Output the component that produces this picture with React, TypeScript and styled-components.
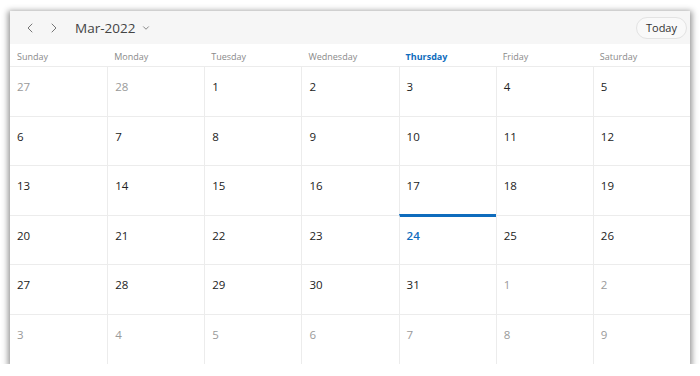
import styled, { createGlobalStyle } from "styled-components";
import { ChevronLeft, ChevronRight, ChevronDown } from "lucide-react";

const GlobalStyle = createGlobalStyle`
	body {
		margin: 0;
		background: #ffffff;
		font-family: "Open Sans", "Noto Sans", sans-serif;
	}
`;

const Page = styled.div`
	padding: 11px 10px 0 10px;
`;

const Card = styled.div`
	width: 680px;
	height: 353px;
	background: #ffffff;
	box-shadow: 0 2px 6px 2px rgba(0, 0, 0, 0.42);
	display: flex;
	flex-direction: column;
`;

const Header = styled.div`
	height: 33px;
	background: #f6f6f6;
	display: flex;
	align-items: center;
	padding: 0 3px 0 8px;
`;

const NavButton = styled.button`
	width: 24px;
	height: 24px;
	border: none;
	background: none;
	padding: 0;
	display: flex;
	align-items: center;
	justify-content: center;
	color: #555;
	cursor: pointer;
`;

const Title = styled.div`
	display: flex;
	align-items: center;
	gap: 6px;
	margin-left: 9px;
	font-size: 13.5px;
	color: #444;
`;

const Spacer = styled.div`
	flex: 1;
`;

const TodayButton = styled.button`
	height: 22px;
	padding: 0 9px;
	border: 1px solid #e3e3e3;
	border-radius: 11px;
	background: #f9f9f9;
	font-family: inherit;
	font-size: 11px;
	color: #333;
`;

const DayNames = styled.div`
	height: 23px;
	display: grid;
	grid-template-columns: repeat(7, 1fr);
	border-bottom: 1px solid #ececec;
	box-sizing: border-box;
`;

const DayName = styled.div<{ $active?: boolean }>`
	font-size: 9px;
	padding: 6px 0 0 7px;
	color: ${(p) => (p.$active ? "#0f6cbd" : "#8a8a8a")};
	font-weight: ${(p) => (p.$active ? 700 : 400)};
`;

const Grid = styled.div`
	flex: 1;
	display: grid;
	grid-template-columns: repeat(7, 1fr);
	grid-template-rows: repeat(6, 1fr);
`;

const Cell = styled.div<{ $today?: boolean; $first?: boolean; $lastRow?: boolean }>`
	border-left: ${(p) => (p.$first ? "none" : "1px solid #ececec")};
	border-bottom: ${(p) => (p.$lastRow ? "none" : "1px solid #ececec")};
	border-top: ${(p) => (p.$today ? "3px solid #0f6cbd" : "none")};
	margin-top: ${(p) => (p.$today ? "-2px" : "0")};
	padding: ${(p) => (p.$today ? "6px" : "7px")} 0 0 7px;
`;

const DayNumber = styled.span<{ $muted?: boolean; $today?: boolean }>`
	font-size: 11.5px;
	color: ${(p) => (p.$today ? "#0f6cbd" : p.$muted ? "#9a9a9a" : "#222")};
	font-weight: ${(p) => (p.$today ? 600 : 400)};
`;

const names = ["Sunday", "Monday", "Tuesday", "Wednesday", "Thursday", "Friday", "Saturday"];

const days: { d: number; muted: boolean }[] = [];
for (let d = 27; d <= 28; d++) days.push({ d, muted: true });
for (let d = 1; d <= 31; d++) days.push({ d, muted: false });
for (let d = 1; days.length < 42; d++) days.push({ d, muted: true });

export default function App() {
	return (
		<>
			<GlobalStyle />
			<Page>
				<Card>
					<Header>
						<NavButton>
							<ChevronLeft size={16} strokeWidth={1.2} />
						</NavButton>
						<NavButton>
							<ChevronRight size={16} strokeWidth={1.2} />
						</NavButton>
						<Title>
							Mar-2022
							<ChevronDown size={10} strokeWidth={1.5} />
						</Title>
						<Spacer />
						<TodayButton>Today</TodayButton>
					</Header>
					<DayNames>
						{names.map((n) => (
							<DayName key={n} $active={n === "Thursday"}>
								{n}
							</DayName>
						))}
					</DayNames>
					<Grid>
						{days.map((day, i) => {
							const today = !day.muted && day.d === 24;
							return (
								<Cell key={i} $today={today} $first={i % 7 === 0} $lastRow={i >= 35}>
									<DayNumber $muted={day.muted} $today={today}>
										{day.d}
									</DayNumber>
								</Cell>
							);
						})}
					</Grid>
				</Card>
			</Page>
		</>
	);
}
